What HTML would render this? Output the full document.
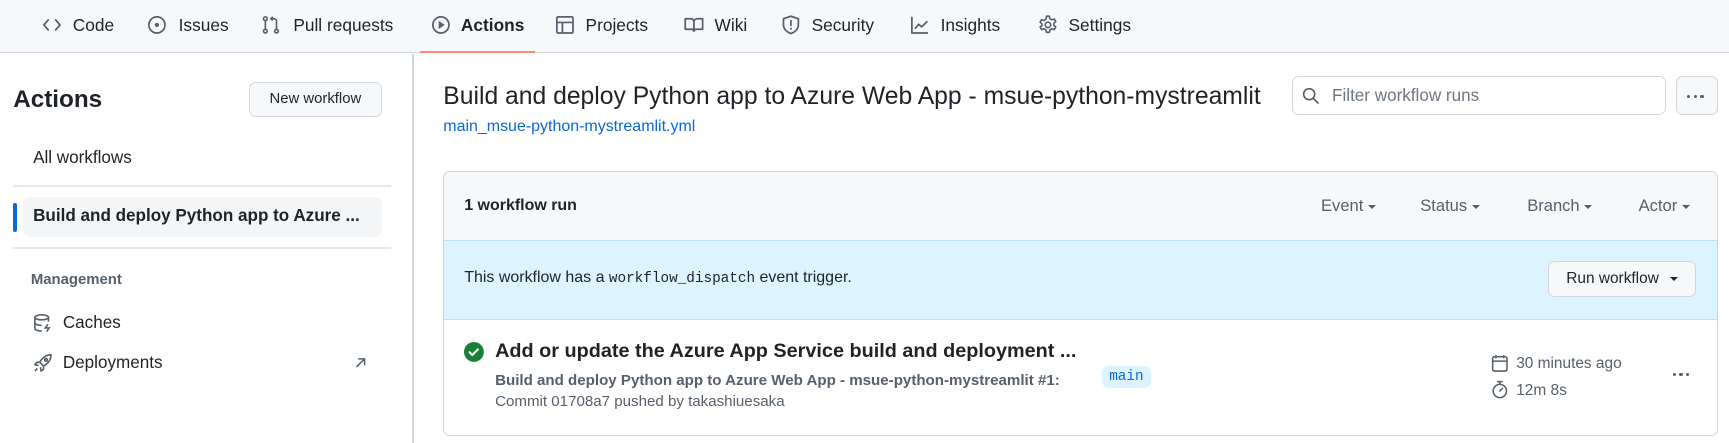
<!DOCTYPE html>
<html><head><meta charset="utf-8"><style>
*{box-sizing:border-box;margin:0;padding:0}
html,body{width:1729px;height:443px;overflow:hidden;background:#fff}
#r{zoom:1.1027;width:1568px;height:402px;position:relative;font-family:"Liberation Sans",Arial,sans-serif;color:#1f2328}
.a{position:absolute;white-space:nowrap}
.hdr{position:absolute;left:0;top:0;width:1568px;height:48px;background:#f6f8fa;border-bottom:1px solid #d0d7de}
.tab{position:absolute;top:13px;font-size:15.7px;line-height:20px;color:#1f2328}
.ic{position:absolute;top:14px}
svg{display:block}
.btn{position:absolute;background:#f6f8fa;border:1px solid #d0d7de;border-radius:6px;font-size:13.5px;font-weight:600;display:flex;align-items:center;justify-content:center}
.gray{color:#57606a}
.caret{display:inline-block;width:0;height:0;border-left:4px solid transparent;border-right:4px solid transparent;border-top:4px solid currentColor;vertical-align:middle;margin-left:4px}
.dots{position:absolute;display:flex;gap:3px}
.dots i{width:3px;height:3px;border-radius:50%;background:#57606a;display:block}
</style></head><body><div id="r">
<div class="hdr"></div>
<div style="position:absolute;left:381px;top:46px;width:104px;height:2px;background:#fd8c73"></div>
<svg class="ic" style="left:38px" width="18" height="18" viewBox="0 0 16 16" fill="none" stroke="#57606a" stroke-width="1.4" stroke-linecap="round" stroke-linejoin="round"><path d="M5 4L1.5 8 5 12M11 4l3.5 4-3.5 4"/></svg>
<div class="tab" style="left:66px">Code</div>
<svg class="ic" style="left:133px" width="18" height="18" viewBox="0 0 16 16" fill="none" stroke="#57606a" stroke-width="1.4"><circle cx="8" cy="8" r="6.5"/><circle cx="8" cy="8" r="1" fill="#57606a"/></svg>
<div class="tab" style="left:162px">Issues</div>
<svg class="ic" style="left:237px" width="18" height="18" viewBox="0 0 16 16" fill="none" stroke="#57606a" stroke-width="1.3"><circle cx="3.5" cy="3" r="1.5"/><circle cx="3.5" cy="13" r="1.5"/><circle cx="12.5" cy="13" r="1.5"/><path d="M3.5 4.5v7M12.5 11.5V5a2 2 0 0 0-2-2H8M9.5 1.5 8 3l1.5 1.5"/></svg>
<div class="tab" style="left:266px">Pull requests</div>
<svg class="ic" style="left:391px" width="18" height="18" viewBox="0 0 16 16" fill="none" stroke="#57606a" stroke-width="1.4"><circle cx="8" cy="8" r="6.5"/><path d="M6.5 5.3v5.4L10.5 8z" fill="#57606a" stroke-width="0.6"/></svg>
<div class="tab" style="left:418px;font-weight:700">Actions</div>
<svg class="ic" style="left:503px" width="18" height="18" viewBox="0 0 16 16" fill="none" stroke="#57606a" stroke-width="1.4"><rect x="1.5" y="1.5" width="13" height="13" rx="1"/><path d="M1.5 6h13M6 6v8.5"/></svg>
<div class="tab" style="left:531px">Projects</div>
<svg class="ic" style="left:620px" width="18" height="18" viewBox="0 0 16 16" fill="none" stroke="#57606a" stroke-width="1.4" stroke-linejoin="round"><path d="M1 3h4.5A2.5 2.5 0 0 1 8 5.5V13a2 2 0 0 0-2-1.5H1zM15 3h-4.5A2.5 2.5 0 0 0 8 5.5V13a2 2 0 0 1 2-1.5h5z"/></svg>
<div class="tab" style="left:648px">Wiki</div>
<svg class="ic" style="left:708px" width="18" height="18" viewBox="0 0 16 16" fill="none" stroke="#57606a" stroke-width="1.4" stroke-linejoin="round"><path d="M8 1l6 2v5c0 3.5-3 6-6 7-3-1-6-3.5-6-7V3z"/><path d="M8 4.5v4" stroke-linecap="round"/><circle cx="8" cy="11" r=".8" fill="#57606a" stroke="none"/></svg>
<div class="tab" style="left:736px">Security</div>
<svg class="ic" style="left:825px" width="18" height="18" viewBox="0 0 16 16" fill="none" stroke="#57606a" stroke-width="1.4" stroke-linejoin="round"><path d="M1.5 1.5v13h13M4 11l3-3.5 2.5 2L14 5"/></svg>
<div class="tab" style="left:853px">Insights</div>
<svg class="ic" style="left:941px" width="18" height="18" viewBox="0 0 16 16" fill="none" stroke="#57606a" stroke-width="1.3" stroke-linejoin="round"><path d="M6.8 1h2.4l.4 2 1.6.9 1.9-.7 1.2 2.1-1.5 1.3v1.8l1.5 1.3-1.2 2.1-1.9-.7-1.6.9-.4 2H6.8l-.4-2-1.6-.9-1.9.7-1.2-2.1 1.5-1.3V7.1L1.7 5.8l1.2-2.1 1.9.7 1.6-.9z"/><circle cx="8" cy="8" r="2.2"/></svg>
<div class="tab" style="left:969px">Settings</div>

<div style="position:absolute;left:374px;top:49px;width:1px;height:353px;background:#d0d7de"></div>

<div class="a" style="left:12px;top:78px;font-size:22px;font-weight:700">Actions</div>
<div class="btn" style="left:226px;top:74px;width:120px;height:32px;font-weight:500">New workflow</div>
<div class="a" style="left:30px;top:134px;font-size:15.5px">All workflows</div>
<div style="position:absolute;left:12px;top:168px;width:343px;height:2px;background:#e6e9ec"></div>
<div style="position:absolute;left:21px;top:179px;width:325px;height:36px;background:#f4f5f7;border-radius:6px"></div>
<div style="position:absolute;left:12px;top:184px;width:3px;height:26px;background:#0969da;border-radius:2px"></div>
<div class="a" style="left:30px;top:187px;font-size:15.5px;font-weight:700">Build and deploy Python app to Azure ...</div>
<div style="position:absolute;left:12px;top:224px;width:343px;height:2px;background:#e6e9ec"></div>
<div class="a gray" style="left:28px;top:247px;font-size:13.5px;font-weight:700">Management</div>
<svg class="a" style="left:30px;top:284px" width="18" height="18" viewBox="0 0 16 16" fill="none" stroke="#57606a" stroke-width="1.3"><ellipse cx="7" cy="3.5" rx="5.5" ry="2"/><path d="M1.5 3.5v9c0 1.1 2.5 2 5.5 2M1.5 8c0 1.1 2.5 2 5.5 2M12.5 3.5V7M12 9l-2 3h3l-2 3"/></svg>
<div class="a" style="left:57px;top:284px;font-size:15.5px">Caches</div>
<svg class="a" style="left:30px;top:320px" width="18" height="18" viewBox="0 0 16 16" fill="none" stroke="#57606a" stroke-width="1.3" stroke-linejoin="round"><path d="M14.5 1.5c-4 0-7 2.5-9 6l3 3c3.5-2 6-5 6-9zM5.5 7.5H3L1.5 9.5l3 .5M8.5 10.5V13l-2 1.5-.5-3M3.5 12.5l-2 2"/><circle cx="10.5" cy="5.5" r="1"/></svg>
<div class="a" style="left:57px;top:320px;font-size:15.5px">Deployments</div>
<svg class="a" style="left:320px;top:322px" width="14" height="14" viewBox="0 0 16 16" fill="none" stroke="#57606a" stroke-width="1.6" stroke-linecap="round"><path d="M4 12L12 4M6 4h6v6"/></svg>

<div class="a" style="left:402px;top:75px;font-size:22.4px">Build and deploy Python app to Azure Web App - msue-python-mystreamlit</div>
<div class="a" style="left:402px;top:107px;font-size:14.5px;color:#0969da">main_msue-python-mystreamlit.yml</div>
<div style="position:absolute;left:1172px;top:69px;width:339px;height:35px;border:1px solid #d0d7de;border-radius:6px"></div>
<svg class="a" style="left:1181px;top:79px" width="16" height="16" viewBox="0 0 16 16" fill="none" stroke="#57606a" stroke-width="1.5" stroke-linecap="round"><circle cx="6.5" cy="6.5" r="5"/><path d="M10.2 10.2L14.5 14.5"/></svg>
<div class="a" style="left:1208px;top:78px;font-size:15.5px;color:#6e7781">Filter workflow runs</div>
<div class="btn" style="left:1520px;top:69px;width:38px;height:35px"></div>
<div class="dots" style="left:1530px;top:86px"><i></i><i></i><i></i></div>

<div style="position:absolute;left:402px;top:155px;width:1156px;height:240px;border:1px solid #d0d7de;border-radius:6px;overflow:hidden">
 <div style="position:absolute;left:0;top:0;width:100%;height:63px;background:#f6f8fa;border-bottom:1px solid #b6e3ff"></div>
 <div style="position:absolute;left:0;top:63px;width:100%;height:71px;background:#ddf4ff;border-bottom:1px solid #b6e3ff"></div>
</div>
<div class="a" style="left:421px;top:179px;font-size:14.5px;font-weight:700">1 workflow run</div>
<div class="a gray" style="left:1198px;top:178px;font-size:15px">Event<span class="caret"></span></div>
<div class="a gray" style="left:1288px;top:178px;font-size:15px">Status<span class="caret"></span></div>
<div class="a gray" style="left:1385px;top:178px;font-size:15px">Branch<span class="caret"></span></div>
<div class="a gray" style="left:1486px;top:178px;font-size:15px">Actor<span class="caret"></span></div>
<div class="a" style="left:421px;top:244px;font-size:14.5px">This workflow has a <span style="font-family:'Liberation Mono',monospace;font-size:13px">workflow_dispatch</span> event trigger.</div>
<div class="btn" style="left:1404px;top:237px;width:134px;height:32px;font-weight:500;font-size:14px">Run workflow<span class="caret" style="margin-left:10px"></span></div>

<svg class="a" style="left:421px;top:310px" width="18" height="18" viewBox="0 0 16 16"><circle cx="8" cy="8" r="8" fill="#1a7f37"/><path d="M4.5 8.3l2.2 2.2 4.5-4.6" fill="none" stroke="#fff" stroke-width="1.7" stroke-linecap="round" stroke-linejoin="round"/></svg>
<div class="a" style="left:449px;top:308px;font-size:18px;font-weight:700">Add or update the Azure App Service build and deployment ...</div>
<div class="a gray" style="left:449px;top:337px;font-size:13.7px;font-weight:700">Build and deploy Python app to Azure Web App - msue-python-mystreamlit #1:</div>
<div class="a gray" style="left:449px;top:356px;font-size:13.7px">Commit 01708a7 pushed by takashiuesaka</div>
<div class="a" style="left:999px;top:332px;width:45px;height:20px;background:#ddf4ff;border-radius:6px;color:#0969da;font-family:'Liberation Mono',monospace;font-size:13px;text-align:center;line-height:20px">main</div>
<svg class="a" style="left:1352px;top:321px" width="16" height="17" viewBox="0 0 16 17" fill="none" stroke="#57606a" stroke-width="1.4"><rect x="1.5" y="2.5" width="13" height="13" rx="1.5"/><path d="M1.5 6.5h13M4.5 1v3M11.5 1v3"/></svg>
<div class="a gray" style="left:1375px;top:322px;font-size:14px">30 minutes ago</div>
<svg class="a" style="left:1352px;top:345px" width="16" height="17" viewBox="0 0 16 17" fill="none" stroke="#57606a" stroke-width="1.4" stroke-linecap="round"><circle cx="8" cy="10" r="6"/><path d="M6 1.5h4M8 1.5v2.5M8 10l2.5-2.5"/></svg>
<div class="a gray" style="left:1375px;top:346px;font-size:14px">12m 8s</div>
<div class="dots" style="left:1517px;top:338px"><i></i><i></i><i></i></div>
</div></body></html>
